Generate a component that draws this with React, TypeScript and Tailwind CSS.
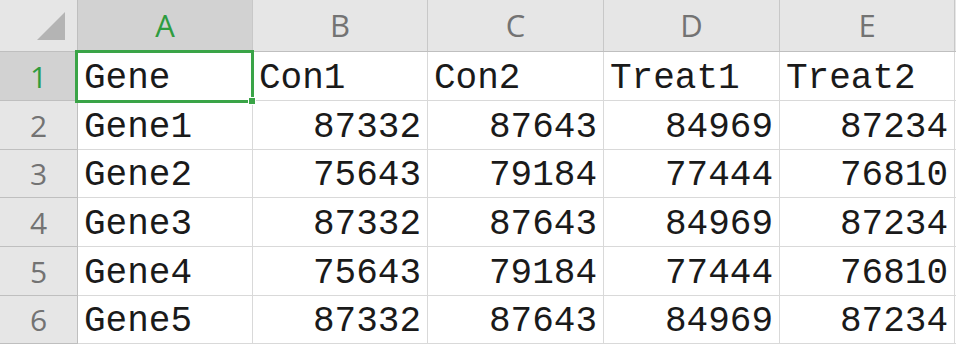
import React from 'react'

const cols = ['A', 'B', 'C', 'D', 'E']
const colWidths = ['w-[175px]', 'w-[175px]', 'w-[176px]', 'w-[176px]', 'w-[175px]']
const rowHeights = ['h-[49px]', 'h-[49px]', 'h-[48px]', 'h-[49px]', 'h-[49px]', 'h-[48px]']

const rows: string[][] = [
  ['Gene', 'Con1', 'Con2', 'Treat1', 'Treat2'],
  ['Gene1', '87332', '87643', '84969', '87234'],
  ['Gene2', '75643', '79184', '77444', '76810'],
  ['Gene3', '87332', '87643', '84969', '87234'],
  ['Gene4', '75643', '79184', '77444', '76810'],
  ['Gene5', '87332', '87643', '84969', '87234'],
]

export default function App() {
  return (
    <div className="relative w-[956px] h-[347px] overflow-hidden bg-white">
      {/* column headers */}
      <div className="flex h-[52px] bg-[#e6e6e6] border-b border-[#bfbfbf]">
        <div className="w-[78px] shrink-0 border-r border-[#bfbfbf] flex items-end justify-end pr-[12px] pb-[11px]">
          <div className="w-0 h-0 border-l-[28px] border-l-transparent border-b-[28px] border-b-[#b4b4b4]" />
        </div>
        {cols.map((c, i) => (
          <div
            key={c}
            className={`${colWidths[i]} shrink-0 border-r border-[#c8c8c8] flex items-center justify-center font-['Open_Sans',sans-serif] text-[31px] ${
              i === 0 ? 'bg-[#d2d2d2] text-[#2e9c3f]' : 'text-[#737373]'
            }`}
          >
            {c}
          </div>
        ))}
        <div className="flex-1" />
      </div>

      {/* rows */}
      {rows.map((row, r) => (
        <div key={r} className={`flex ${rowHeights[r]}`}>
          <div
            className={`w-[78px] shrink-0 border-r border-b border-[#bfbfbf] flex items-center justify-center font-['Open_Sans',sans-serif] text-[30px] ${
              r === 0 ? 'bg-[#d2d2d2] text-[#2e9c3f]' : 'bg-[#e6e6e6] text-[#737373]'
            }`}
          >
            {r + 1}
          </div>
          {row.map((v, i) => (
            <div
              key={i}
              className={`${colWidths[i]} shrink-0 border-r border-b border-[#d9d9d9] flex items-center px-[6px] pt-[5px] font-['Courier_New','Liberation_Mono',monospace] text-[36px] leading-none text-[#1a1a1a] whitespace-nowrap overflow-hidden ${
                r > 0 && i > 0 ? 'justify-end' : 'justify-start'
              }`}
            >
              {v}
            </div>
          ))}
          <div className="flex-1 border-b border-[#d9d9d9]" />
        </div>
      ))}

      {/* selection */}
      <div className="absolute left-[75px] top-[50px] w-[179px] h-[53px] border-[3px] border-[#3aa447]" />
      <div className="absolute left-[248px] top-[97px] w-[8px] h-[8px] bg-[#3aa447] border border-white" />
    </div>
  )
}
